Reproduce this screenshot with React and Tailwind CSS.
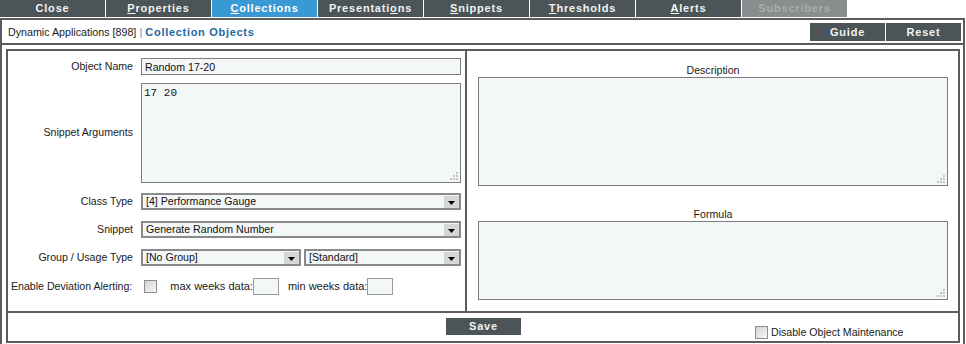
import React from "react";

/* Tabs */
const tabs = [
  { label: "Close" },
  { label: "Properties", key: 0 },
  { label: "Collections", key: 0, active: true },
  { label: "Presentations", key: 10 },
  { label: "Snippets", key: 0 },
  { label: "Thresholds", key: 0 },
  { label: "Alerts", key: 0 },
  { label: "Subscribers", disabled: true },
];

function TabLabel({ label, index }) {
  if (index === undefined) return label;
  return (
    <>
      {label.slice(0, index)}
      <span className="underline underline-offset-[1px]">{label[index]}</span>
      {label.slice(index + 1)}
    </>
  );
}

function Grip() {
  return (
    <svg
      className="pointer-events-none absolute right-[3px] bottom-[3px]"
      width="8"
      height="8"
      viewBox="0 0 8 8"
    >
      <rect x="6" y="0" width="2" height="2" fill="#c4c4c4" />
      <rect x="3" y="3" width="2" height="2" fill="#c4c4c4" />
      <rect x="6" y="3" width="2" height="2" fill="#c4c4c4" />
      <rect x="0" y="6" width="2" height="2" fill="#c4c4c4" />
      <rect x="3" y="6" width="2" height="2" fill="#c4c4c4" />
      <rect x="6" y="6" width="2" height="2" fill="#c4c4c4" />
    </svg>
  );
}

function TextArea({ value = "", className = "", mono }) {
  return (
    <div className={`relative ${className}`}>
      <textarea
        readOnly
        value={value}
        className={`block h-full w-full resize-none border border-[#7c7c7c] bg-[#f3f7f8] px-[2px] pt-[3px] text-[#111] outline-none ${
          mono ? "font-['Liberation_Mono',monospace] text-[11px] leading-[13px]" : ""
        }`}
      />
      <Grip />
    </div>
  );
}

function Select({ value, className = "" }) {
  return (
    <div
      className={`flex h-[17px] items-center border-2 border-[#8a8a8a] bg-[#f3f7f8] ${className}`}
    >
      <span className="flex-1 truncate pl-[3px] leading-none text-[#111]">
        {value}
      </span>
      <span className="flex h-[12px] w-[15px] items-end justify-center bg-[#d6d6d6] pb-[3px]">
        <svg width="7" height="4" viewBox="0 0 7 4">
          <path d="M0 0h7L3.5 4z" fill="#000" />
        </svg>
      </span>
    </div>
  );
}

function Checkbox({ className = "" }) {
  return (
    <span
      className={`inline-block h-[13px] w-[13px] border border-[#8e8e8e] bg-gradient-to-br from-[#d4d4d4] to-[#f7f7f7] ${className}`}
    />
  );
}

function Row({ label, className = "", children }) {
  return (
    <div className={`flex items-center ${className}`}>
      <span className="w-[126px] pr-px text-right">{label}</span>
      <div className="ml-[7px] flex w-[320px] gap-[3px]">{children}</div>
    </div>
  );
}

function App() {
  return (
    <div className="h-[344px] w-[966px] overflow-hidden bg-white font-['Liberation_Sans',Arial,sans-serif] text-[10.6px] text-[#1a1a1a]">
      {/* Tabs */}
      <nav className="flex h-[17px] gap-px">
        {tabs.map((tab) => (
          <div
            key={tab.label}
            className={`flex w-[105px] items-center justify-center text-[11px] font-bold tracking-[0.8px]
              ${
                tab.active
                  ? "bg-[#3899d5] text-white"
                  : tab.disabled
                    ? "bg-[#8a8d8d] text-[#a9acac]"
                    : "bg-[#4b5456] text-[#f2f2f2]"
              }`}
          >
            <TabLabel label={tab.label} index={tab.key} />
          </div>
        ))}
      </nav>

      <div className="mt-px h-[326px] w-[965px] border-x-2 border-t-2 border-[#5c5c5c]">
        {/* Header */}
        <header className="flex h-[25px] items-start border-b-2 border-[#5c5c5c] pr-[2px] pl-[6px]">
          <p className="mt-[6px] flex-1 text-[11px] leading-[13px]">
            <span className="text-[10.7px]">Dynamic Applications [898]</span>{" "}
            <span className="text-[#4a93cc]">|</span>{" "}
            <span className="font-bold tracking-[0.7px] text-[#1c68a3]">
              Collection Objects
            </span>
          </p>
          <div className="mt-[3px] flex gap-px text-[11px]">
            {["Guide", "Reset"].map((b) => (
              <span
                key={b}
                className="flex h-[18px] w-[75px] items-center justify-center bg-[#4b5456] font-bold tracking-[0.8px] text-[#f2f2f2]"
              >
                {b}
              </span>
            ))}
          </div>
        </header>

        {/* Form */}
        <div className="mt-[4px] ml-[4px] flex h-[294px] w-[954px] flex-col border-2 border-[#5c5c5c]">
          <div className="flex h-[263px] border-b-2 border-[#5c5c5c]">
            <div className="w-[459px] border-r-2 border-[#5c5c5c] pt-[7px]">
              <Row label="Object Name">
                <input
                  readOnly
                  value="Random 17-20"
                  className="h-[17px] w-full border border-[#7c7c7c] bg-[#f3f7f8] px-[3px] text-[#111] outline-none"
                />
              </Row>
              <Row label="Snippet Arguments" className="mt-[8px]">
                <TextArea value="17 20" mono className="h-[100px] w-full" />
              </Row>
              <Row label="Class Type" className="mt-[10px]">
                <Select value="[4] Performance Gauge" className="w-full" />
              </Row>
              <Row label="Snippet" className="mt-[11px]">
                <Select value="Generate Random Number" className="w-full" />
              </Row>
              <Row label="Group / Usage Type" className="mt-[11px]">
                <Select value="[No Group]" className="w-[160px]" />
                <Select value="[Standard]" className="flex-1" />
              </Row>
              <div className="mt-[12px] flex h-[17px] items-center pl-[3px]">
                <span>Enable Deviation Alerting:</span>
                <Checkbox className="ml-[12px]" />
                <span className="ml-[13px] text-[11px]">max weeks data:</span>
                <span className="h-[17px] w-[26px] border border-[#9a9a9a] bg-[#f3f7f8]" />
                <span className="ml-[9px] text-[11px]">min weeks data:</span>
                <span className="h-[17px] w-[26px] border border-[#9a9a9a] bg-[#f3f7f8]" />
              </div>
            </div>

            <div className="flex-1 pt-[12px]">
              <p className="ml-[11px] w-[470px] text-center leading-[14px]">
                Description
              </p>
              <TextArea className="ml-[11px] h-[109px] w-[470px]" />
              <p className="mt-[21px] ml-[11px] w-[470px] text-center leading-[14px]">
                Formula
              </p>
              <TextArea className="ml-[11px] h-[79px] w-[470px]" />
            </div>
          </div>

          {/* Footer */}
          <div className="flex flex-1 items-start">
            <span className="mt-[5px] ml-[438px] flex h-[17px] w-[75px] items-center justify-center bg-[#4b5456] text-[11px] font-bold tracking-[0.8px] text-[#f2f2f2]">
              Save
            </span>
            <div className="mt-[10px] ml-[234px] flex items-center gap-[3px]">
              <Checkbox />
              <span className="mt-[2px]">Disable Object Maintenance</span>
            </div>
          </div>
        </div>
      </div>
    </div>
  );
}

export default App;
